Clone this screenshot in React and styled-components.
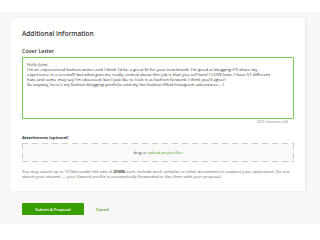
import styled, { createGlobalStyle } from "styled-components";

const GlobalStyle = createGlobalStyle`
  html, body {
    margin: 0;
    padding: 0;
    background: #fff;
  }
  body {
    font-family: "Open Sans", "Liberation Sans", sans-serif;
    color: #222;
  }
`;

const coverLetter = `Hello John,
I'm an experienced fashion writer and I think I'd be a great fit for your new brand. I'm good at blogging (I'll share my
experience in a second!) but what gets me really excited about this job is that you sell hats! I LOVE hats. I have 57 different
hats and some may say I'm obsessed, but I just like to look it as fashion forward. I think you'll agree!
So anyway, here's my fashion blogging portfolio and my hat fashion-filled Instagram adventures....)`;

export default function App() {
  return (
    <>
      <GlobalStyle />
      <Page>
        <Card>
          <Title>Additional Information</Title>

          <Field>
            <Label htmlFor="cover">Cover Letter</Label>
            <TextArea id="cover" defaultValue={coverLetter} spellCheck={false} />
            <Counter>4537 characters left</Counter>
          </Field>

          <Field>
            <SmallLabel>Attachments (optional)</SmallLabel>
            <DropZone>
              drag or <Link>upload project files</Link>
            </DropZone>
            <Help>
              You may attach up to 10 files under the size of <b>25MB</b> each. Include work samples or other
              documents to support your application. Do not
              <br />
              attach your résumé — your Upwork profile is automatically forwarded to the client with your proposal.
            </Help>
          </Field>
        </Card>

        <Actions>
          <Primary type="button">Submit A Proposal</Primary>
          <TextButton type="button">Cancel</TextButton>
        </Actions>
      </Page>
    </>
  );
}

const Page = styled.main`
  margin-top: 12px;
  background: #f7f7f7;
  padding: 6px 15px 0 11px;
  height: 212px;
  box-sizing: border-box;
`;

const Card = styled.section`
  background: #fff;
  box-shadow: 0 0 1px rgba(0, 0, 0, 0.08), 2px 0 2px rgba(0, 0, 0, 0.04);
  padding: 12px 11px 10px 11px;
  height: 173px;
  box-sizing: border-box;
  display: flex;
  flex-direction: column;
`;

const Title = styled.h2`
  margin: 0 0 10px;
  font-size: 6.5px;
  line-height: 8px;
  font-weight: 600;
  color: #333;
`;

const Field = styled.div`
  display: flex;
  flex-direction: column;
`;

const Label = styled.label`
  font-size: 5.4px;
  line-height: 7px;
  font-weight: 600;
  color: #333;
  margin-bottom: 2px;
`;

const SmallLabel = styled.div`
  font-size: 4px;
  line-height: 5px;
  font-weight: 700;
  color: #333;
  margin: 11px 0 3px;
`;

const TextArea = styled.textarea`
  display: block;
  width: 100%;
  height: 62px;
  box-sizing: border-box;
  border: 1px solid #7cc94f;
  border-radius: 1px;
  padding: 4px 4px;
  resize: none;
  outline: none;
  font-family: "Open Sans", "Liberation Sans", sans-serif;
  font-size: 4.3px;
  line-height: 5px;
  color: #333;
  white-space: pre;
  overflow: hidden;
`;

const Counter = styled.div`
  text-align: right;
  padding-right: 6px;
  margin-top: 1px;
  font-size: 3.4px;
  line-height: 4px;
  color: #888;
`;

const DropZone = styled.div`
  height: 19px;
  display: flex;
  align-items: center;
  justify-content: center;
  background-color: #f9f9f9;
  background-image:
    repeating-linear-gradient(90deg, #ccc 0 6px, transparent 6px 10px),
    repeating-linear-gradient(90deg, #ccc 0 6px, transparent 6px 10px),
    repeating-linear-gradient(180deg, #ccc 0 6px, transparent 6px 10px),
    repeating-linear-gradient(180deg, #ccc 0 6px, transparent 6px 10px);
  background-size: 100% 1px, 100% 1px, 1px 100%, 1px 100%;
  background-position: 0 0, 0 100%, 0 0, 100% 0;
  background-repeat: no-repeat;
  font-size: 3.9px;
  color: #444;
`;

const Link = styled.span`
  color: #37a000;
  margin-left: 0.3em;
`;

const Help = styled.p`
  margin: 7px 0 0;
  font-size: 4.2px;
  line-height: 5px;
  color: #666;
  white-space: nowrap;

  & b {
    font-weight: 700;
    color: #555;
  }
`;

const Actions = styled.div`
  display: flex;
  align-items: center;
  gap: 12px;
  padding: 12px 0 0 11px;
`;

const Primary = styled.button`
  width: 62px;
  height: 12px;
  border: none;
  border-radius: 1px;
  background: #37a000;
  color: #fff;
  font-family: "Open Sans", "Liberation Sans", sans-serif;
  font-size: 4px;
  font-weight: 600;
  padding: 0;
  cursor: pointer;
`;

const TextButton = styled.button`
  border: none;
  background: none;
  padding: 0;
  color: #37a000;
  font-family: "Open Sans", "Liberation Sans", sans-serif;
  font-size: 4px;
  font-weight: 600;
  cursor: pointer;
`;
